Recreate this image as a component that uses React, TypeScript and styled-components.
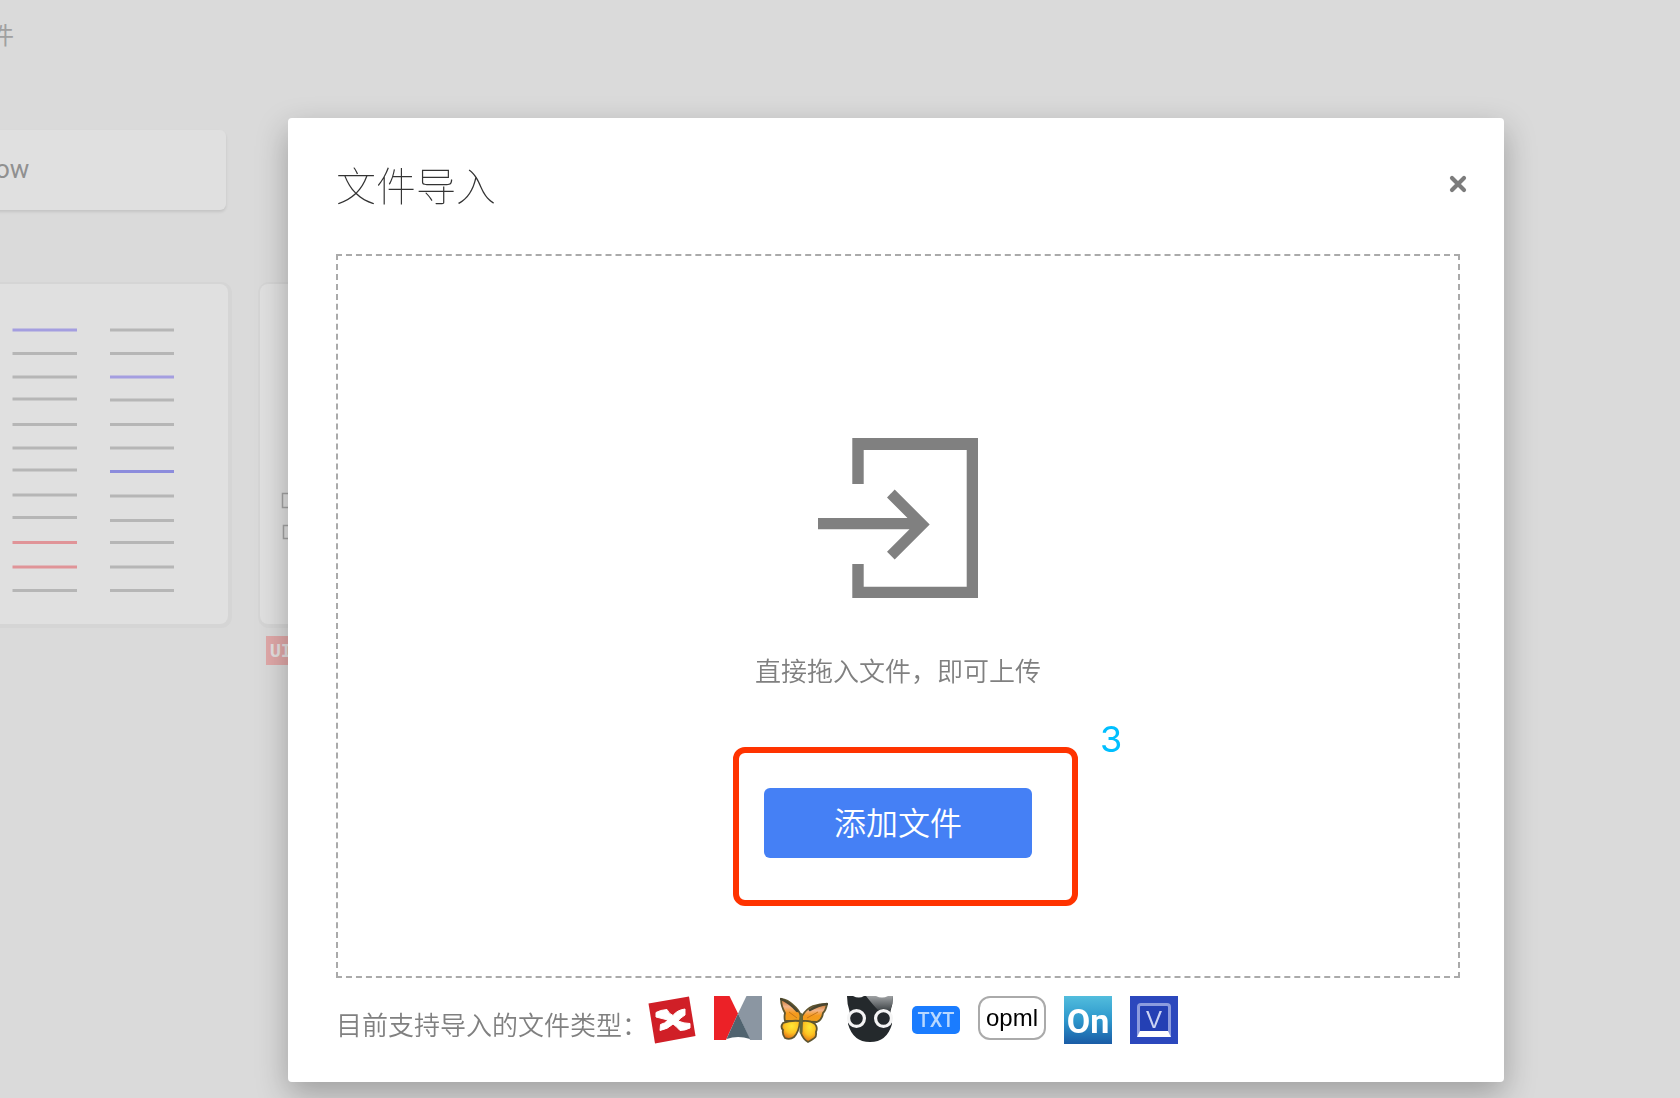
import React from "react";
import styled, { createGlobalStyle } from "styled-components";

const GlobalStyle = createGlobalStyle`
  *, *::before, *::after { box-sizing: border-box; }
  body {
    margin: 0;
    min-height: 100vh;
    overflow: hidden;
    background: #dadada;
    color: #808080;
    font-family: "Liberation Sans", "Noto Sans CJK SC", sans-serif;
  }
`;

/* ---------- page behind the dialog ---------- */

const Page = styled.div`
  display: flex;
  flex-direction: column;
  height: 100vh;
  margin-left: -60px;
  overflow: hidden;
`;

const Crumb = styled.div`
  padding: 18px 0 0 50px;
  height: 130px;
  color: #a0a0a0;
  font-size: 24px;
  line-height: 36px;
`;

const FolderCard = styled.div`
  display: flex;
  align-items: center;
  width: 286px;
  height: 80px;
  padding: 0 55px 2px;
  border-radius: 6px;
  background: #e0e0e0;
  box-shadow: 0 2px 3px rgba(0, 0, 0, 0.1);
  color: #909090;
  font-family: Roboto, "Liberation Sans", sans-serif;
  font-size: 26px;
`;

const Files = styled.div`
  display: grid;
  grid-template-columns: 288px 288px;
  gap: 32px;
  padding-top: 74px;
`;

const FileItem = styled.div`
  display: flex;
  flex-direction: column;
  align-items: flex-start;
  gap: 12px;
`;

const Thumb = styled.div`
  width: 100%;
  height: 340px;
  border-radius: 8px;
  background: #e0e0e0;
  box-shadow: 1px 1px 0 3px #d5d5d5;
  overflow: hidden;
`;

const Tag = styled.span`
  margin-left: 6px;
  padding: 0 4px;
  background: #e0a8a8;
  color: #e4e0e0;
  font: bold 18px/29px "DejaVu Sans Mono", monospace;
`;

/* ---------- dialog ---------- */

const Overlay = styled.div`
  position: fixed;
  inset: 0;
  display: flex;
  align-items: flex-start;
  padding: 118px 176px 0 288px;
`;

const Dialog = styled.section`
  flex: 1;
  padding: 40px 44px 30px 48px;
  border-radius: 4px;
  background: #fff;
  box-shadow: 0 12px 32px rgba(0, 0, 0, 0.28);
`;

const DialogHeader = styled.header`
  display: flex;
  align-items: flex-start;
  justify-content: space-between;
  height: 96px;
`;

const Title = styled.h1`
  margin: 0;
  color: #333;
  font-family: "Noto Sans CJK SC", sans-serif;
  font-size: 40px;
  font-weight: 100;
  line-height: 52px;
`;

const CloseButton = styled.button`
  display: flex;
  align-items: center;
  justify-content: center;
  width: 32px;
  height: 52px;
  margin-right: -14px;
  padding: 0;
  border: 0;
  background: none;
  cursor: pointer;
`;

const DropZone = styled.div`
  display: flex;
  flex-direction: column;
  align-items: center;
  padding: 182px 0 118px;
  border: 2px dashed #aaa;
`;

const Hint = styled.p`
  margin: 52px 0 98px;
  font-family: "Noto Sans CJK SC", sans-serif;
  font-size: 26px;
  font-weight: 350;
  line-height: 40px;
`;

const UploadArea = styled.div`
  position: relative;
`;

const UploadButton = styled.button`
  display: block;
  width: 268px;
  height: 70px;
  padding: 0 0 4px;
  border: 0;
  border-radius: 6px;
  background: #4580f5;
  color: #fff;
  font-family: "Noto Sans CJK SC", sans-serif;
  font-size: 32px;
  font-weight: 350;
  line-height: 66px;
  cursor: pointer;
`;

const Highlight = styled.div`
  position: absolute;
  inset: -41px -46px -48px -31px;
  border: 6px solid #ff3300;
  border-radius: 12px;
  pointer-events: none;
`;

const StepNumber = styled.span`
  position: absolute;
  top: -72px;
  left: 336px;
  color: #00bfff;
  font-family: Inter, sans-serif;
  font-size: 36px;
  line-height: 46px;
`;

const Footer = styled.footer`
  display: flex;
  align-items: flex-start;
  padding-top: 18px;
`;

const FooterLabel = styled.span`
  font-family: "Noto Sans CJK SC", sans-serif;
  font-size: 26px;
  font-weight: 350;
  line-height: 56px;
`;

const TypeList = styled.ul`
  display: flex;
  align-items: flex-start;
  gap: 18px;
  margin: 0;
  padding: 0;
  list-style: none;

  li { display: flex; align-items: center; }
  svg { display: block; }
`;

const TxtItem = styled.li`
  height: 48px;
`;

const TxtBadge = styled.span`
  width: 48px;
  border-radius: 5px;
  background: #1a7cff;
  color: #b8d8ff;
  font: 500 20px/28px Roboto, sans-serif;
  text-align: center;
`;

const OpmlBadge = styled.span`
  width: 68px;
  border: 2px solid #aaa;
  border-radius: 12px;
  color: #000;
  font-size: 24px;
  line-height: 40px;
  text-align: center;
`;

const OnBadge = styled.span`
  width: 48px;
  height: 48px;
  background: linear-gradient(#52bddd, #2d97cc 50%, #1a5ca6);
  color: #fff;
  font: bold 34px/50px Roboto, sans-serif;
  text-align: center;
`;

const VBadge = styled.span`
  display: flex;
  width: 48px;
  height: 48px;
  padding: 7px;
  background: #2c48bd;
`;

const VFrame = styled.span`
  flex: 1;
  border: 3px solid #8c9cde;
  border-bottom: 6px solid #fff;
  border-radius: 4px 4px 0 0;
  background: #2440b4;
  color: #ccd4f4;
  font-size: 24px;
  line-height: 28px;
  text-align: center;
`;

/* ---------- drawings ---------- */

const GREY = "#b6b6b6";
const VIOLET = "#a49ee0";
const RED = "#e09498";
const BLUE = "#8c8cdc";

const LEFT_LINES: [number, string][] = [
  [46, VIOLET], [69.5, GREY], [93, GREY], [115, GREY], [140.5, GREY], [164, GREY],
  [186, GREY], [211, GREY], [233.5, GREY], [258.5, RED], [283, RED], [306.5, GREY],
];
const RIGHT_LINES: [number, string][] = [
  [46, GREY], [69.5, GREY], [93, VIOLET], [116, GREY], [140.5, GREY], [164, GREY],
  [187.5, BLUE], [212, GREY], [236.5, GREY], [258.5, GREY], [283, GREY], [306.5, GREY],
];

const OutlineThumb = () => (
  <svg width="288" height="340" viewBox="0 0 288 340" aria-hidden="true">
    {LEFT_LINES.map(([y, c]) => <path key={y} d={`M72.500 ${y}h64.500`} stroke={c} strokeWidth="3" />)}
    {RIGHT_LINES.map(([y, c]) => <path key={y} d={`M170 ${y}h64`} stroke={c} strokeWidth="3" />)}
  </svg>
);

const BoxesThumb = () => (
  <svg width="288" height="340" viewBox="0 0 288 340" fill="none" stroke="#a4a4a4" strokeWidth="1.500" aria-hidden="true">
    <rect x="22.500" y="209.500" width="14" height="14" />
    <rect x="23.500" y="241.500" width="13" height="13" />
  </svg>
);

const CloseIcon = () => (
  <svg width="18" height="18" viewBox="0 0 18 18" aria-hidden="true">
    <path d="M3 3L15 15M15 3L3 15" stroke="#7c7c7c" strokeWidth="4.200" strokeLinecap="round" />
  </svg>
);

const ImportIcon = () => (
  <svg width="160" height="160" viewBox="0 0 160 160" fill="#808080" aria-hidden="true">
    <path d="M34.300 0H160V160H34.300V126H45.700V148.700H148.700V12H45.700V46H34.300Z" />
    <path d="M0 80H89.500L69 59.500L76.700 51.500L111.700 86.500L76.700 121.500L69 113.700L91.500 91.300H0Z" />
  </svg>
);

const XMindIcon = () => (
  <svg width="48" height="48" viewBox="0 0 48 48" role="img" aria-label="XMind">
    <path d="M.5 7.500L41 .5L47.500 40L7 47.500Z" fill="#d01f27" />
    <path d="M8 16.500Q12 14 19 13.500Q21 18 25 19.500Q29 14 37 13L37 19Q32 22 30 25Q36 27.500 42 27.500L42 32Q37 34.500 32 34.500Q28 30 25 28Q20 33 12 34.500L12.500 28.500Q17 27.500 20 24Q14 22.500 8 21Z" fill="#fff" stroke="#fff" strokeLinejoin="round" />
  </svg>
);

const MindManagerIcon = () => (
  <svg width="48" height="48" viewBox="0 0 48 48" role="img" aria-label="MindManager">
    <path d="M0 0H15.500L24 17.500L12 44H0Z" fill="#ec2127" />
    <path d="M32.500 0H48V44H36L24 17.500Z" fill="#8b96a2" />
    <path d="M24 17.500L36 43Q24 39 12.500 43Z" fill="#50636f" />
  </svg>
);

const ButterflyIcon = () => (
  <svg width="48" height="48" viewBox="0 0 48 48" role="img" aria-label="FreeMind">
    <defs>
      <linearGradient id="wing" x1="0" y1="0" x2="0" y2="1">
        <stop offset="0" stopColor="#c9772c" />
        <stop offset=".35" stopColor="#f2b48a" />
        <stop offset=".65" stopColor="#f59a1c" />
        <stop offset="1" stopColor="#f0a01e" />
      </linearGradient>
      <radialGradient id="lowerWing" cx=".55" cy=".3" r=".75">
        <stop offset="0" stopColor="#ffe838" />
        <stop offset=".5" stopColor="#fdc422" />
        <stop offset="1" stopColor="#de6514" />
      </radialGradient>
    </defs>
    <g stroke="#5f5630" strokeWidth="1.800" strokeLinejoin="round">
      <path d="M1 3Q8 4 13 9Q19 14 21 20L20 25Q12 25 5 25Q4 21 5 17Q1 10 1 3Z" fill="url(#wing)" />
      <path d="M22 20Q26 13 33 10Q40 8 47 8Q46 14 43 17Q42 24 37 26Q29 26 22 25Z" fill="url(#wing)" />
      <path d="M20 25Q11 24 3 27Q0 31 3 34Q2 38 5 42Q10 44 14 41Q19 36 20 25Z" fill="url(#lowerWing)" />
      <path d="M22 25Q30 24 35 28Q38 32 36 36Q37 41 33 43Q30 45 28 46Q23 43 21 37Z" fill="url(#lowerWing)" />
    </g>
    <path d="M1 3Q10 7 17 15M47 8Q38 9 30 14" fill="none" stroke="#4a4630" strokeWidth="2.400" strokeLinecap="round" />
    <path d="M9 16L17 22M38 16L27 22" stroke="#c4761c" />
    <path d="M21 18.500L21 36" stroke="#65683a" strokeWidth="3" strokeLinecap="round" />
  </svg>
);

const OwlIcon = () => (
  <svg width="48" height="48" viewBox="0 0 48 48" role="img" aria-label="MindNode">
    <defs>
      <linearGradient id="sheen" x1="0" y1="0" x2="0" y2="1">
        <stop offset="0" stopColor="#a0a3a5" />
        <stop offset="1" stopColor="#3c4144" />
      </linearGradient>
    </defs>
    <path d="M1 0H47Q47 8 44.500 15L46 28Q41 46 24 46Q7 46 2 28L3.500 15Q1 8 1 0Z" fill="#24292c" />
    <path d="M20 0H47Q47 8 44 15Q38 11 32 14Q27 9 20 0Z" fill="url(#sheen)" />
    <path d="M7 0Q13 3 18 0ZM30 0Q36 3 42 0Z" fill="#fff" />
    <circle cx="10.500" cy="22.500" r="7.900" fill="#24292c" stroke="#f4f4f4" strokeWidth="3.200" />
    <circle cx="37.500" cy="22.500" r="7.900" fill="#24292c" stroke="#f4f4f4" strokeWidth="3.200" />
  </svg>
);

export default function App() {
  return (
    <>
      <GlobalStyle />
      <Page>
        <Crumb>件</Crumb>
        <FolderCard>ow</FolderCard>
        <Files>
          <FileItem>
            <Thumb><OutlineThumb /></Thumb>
          </FileItem>
          <FileItem>
            <Thumb><BoxesThumb /></Thumb>
            <Tag>UI</Tag>
          </FileItem>
        </Files>
      </Page>
      <Overlay>
        <Dialog role="dialog" aria-labelledby="dialog-title">
          <DialogHeader>
            <Title id="dialog-title">文件导入</Title>
            <CloseButton type="button" aria-label="关闭"><CloseIcon /></CloseButton>
          </DialogHeader>
          <DropZone>
            <ImportIcon />
            <Hint>直接拖入文件，即可上传</Hint>
            <UploadArea>
              <UploadButton type="button">添加文件</UploadButton>
              <Highlight />
              <StepNumber>3</StepNumber>
            </UploadArea>
          </DropZone>
          <Footer>
            <FooterLabel>目前支持导入的文件类型：</FooterLabel>
            <TypeList>
              <li><XMindIcon /></li>
              <li><MindManagerIcon /></li>
              <li><ButterflyIcon /></li>
              <li><OwlIcon /></li>
              <TxtItem><TxtBadge>TXT</TxtBadge></TxtItem>
              <li><OpmlBadge>opml</OpmlBadge></li>
              <li><OnBadge>On</OnBadge></li>
              <li><VBadge><VFrame>V</VFrame></VBadge></li>
            </TypeList>
          </Footer>
        </Dialog>
      </Overlay>
    </>
  );
}
